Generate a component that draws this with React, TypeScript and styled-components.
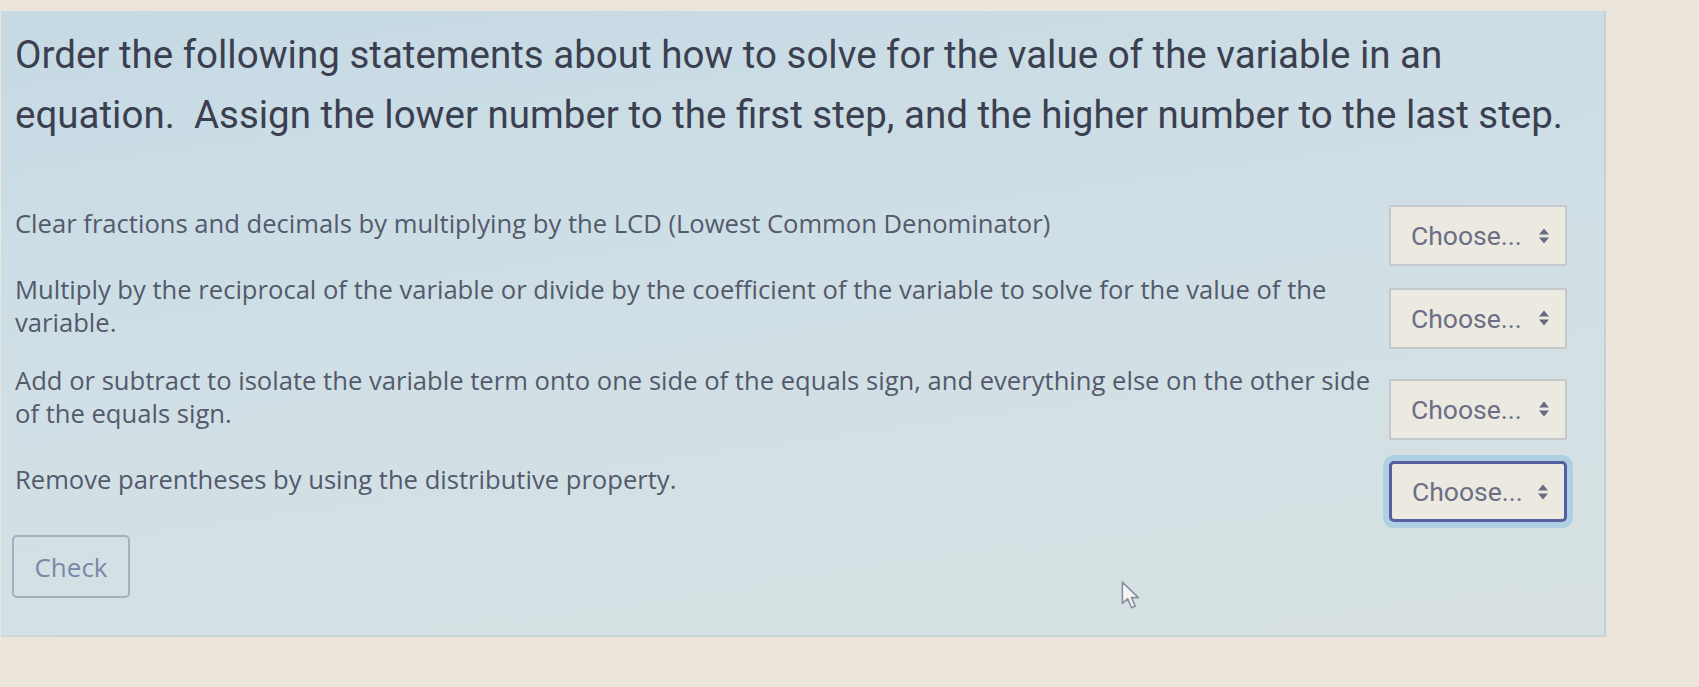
import React from "react";
import styled, { createGlobalStyle } from "styled-components";

const GlobalStyle = createGlobalStyle`
    html, body {
        margin: 0;
        padding: 0;
        background: #ebe5db;
    }
    body {
        width: 1699px;
        height: 687px;
        overflow: hidden;
    }
`;

const Page = styled.div`
    position: relative;
    width: 1699px;
    height: 687px;
    padding-top: 11px;
    box-sizing: border-box;
`;

const Panel = styled.div`
    width: 1605px;
    height: 626px;
    margin-left: 1px;
    box-sizing: border-box;
    padding: 14px 37px 0 14px;
    background: linear-gradient(172deg, #c6dae4 0%, #d0dfe6 45%, #d7e1e1 100%);
    border-right: 2px solid #c3d1d6;
    border-bottom: 2px solid #cbd6d6;
`;

const Title = styled.div`
    font-family: Roboto, "Liberation Sans", sans-serif;
    font-size: 38.5px;
    line-height: 60px;
    color: #3b4050;
    margin-bottom: 60px;
    white-space: pre-wrap;
`;

const Rows = styled.div`
    display: flex;
    flex-direction: column;
    gap: 13px;
`;

const Row = styled.div`
    display: flex;
    align-items: center;
    gap: 14px;
`;

const Statement = styled.div`
    flex: 1;
    font-family: "Open Sans", "Noto Sans", sans-serif;
    font-size: 25.6px;
    line-height: 33px;
    color: #535a6c;
    margin: -6px 0 18px;
`;

const Select = styled.div<{ $focused?: boolean }>`
    flex: none;
    width: 178px;
    height: 61px;
    box-sizing: border-box;
    display: flex;
    align-items: center;
    justify-content: space-between;
    padding: 0 15px 0 20px;
    background: #ece9e1;
    border: 2px solid ${(p) => (p.$focused ? "#575fa0" : "#c6c9cc")};
    border-width: ${(p) => (p.$focused ? "3px" : "2px")};
    border-radius: ${(p) => (p.$focused ? "5px" : "1px")};
    box-shadow: ${(p) => (p.$focused ? "0 0 0 6px #aed0e2" : "none")};
    font-family: Roboto, "Liberation Sans", sans-serif;
    font-size: 26.5px;
    color: #6b6f86;
`;

const CheckButton = styled.div`
    margin-top: 13px;
    margin-left: -3px;
    width: 118px;
    height: 63px;
    box-sizing: border-box;
    display: flex;
    align-items: center;
    justify-content: center;
    border: 2px solid #a9aeb8;
    border-radius: 5px;
    font-family: "Open Sans", "Noto Sans", sans-serif;
    font-size: 26px;
    color: #7b87a6;
`;

const Cursor = styled.svg`
    position: absolute;
    left: 1121px;
    top: 581px;
`;

const Arrows = () => (
    <svg width="12" height="18" viewBox="0 0 12 18">
        <path d="M6 1.5 L11 7.5 L1 7.5 Z" fill="#666b82" />
        <path d="M6 16.5 L11 10.5 L1 10.5 Z" fill="#666b82" />
    </svg>
);

const statements = [
    "Clear fractions and decimals by multiplying by the LCD (Lowest Common Denominator)",
    "Multiply by the reciprocal of the variable or divide by the coefficient of the variable to solve for the value of the variable.",
    "Add or subtract to isolate the variable term onto one side of the equals sign, and everything else on the other side of the equals sign.",
    "Remove parentheses by using the distributive property.",
];

export default function App() {
    return (
        <>
            <GlobalStyle />
            <Page>
                <Panel>
                    <Title>
                        {"Order the following statements about how to solve for the value of the variable in an equation.  Assign the lower number to the first step, and the higher number to the last step."}
                    </Title>
                    <Rows>
                        {statements.map((s, i) => (
                            <Row key={i}>
                                <Statement>{s}</Statement>
                                <Select $focused={i === 3}>
                                    <span>Choose...</span>
                                    <Arrows />
                                </Select>
                            </Row>
                        ))}
                    </Rows>
                    <CheckButton>Check</CheckButton>
                </Panel>
                <Cursor width="22" height="30" viewBox="0 0 20 28">
                    <path d="M1 1 L1 21 L6 16.5 L9.5 25 L13 23.5 L9.5 15.5 L16 15.5 Z" fill="#f4f4f2" stroke="#8a8fa0" strokeWidth="1.5" strokeLinejoin="round" />
                </Cursor>
            </Page>
        </>
    );
}
